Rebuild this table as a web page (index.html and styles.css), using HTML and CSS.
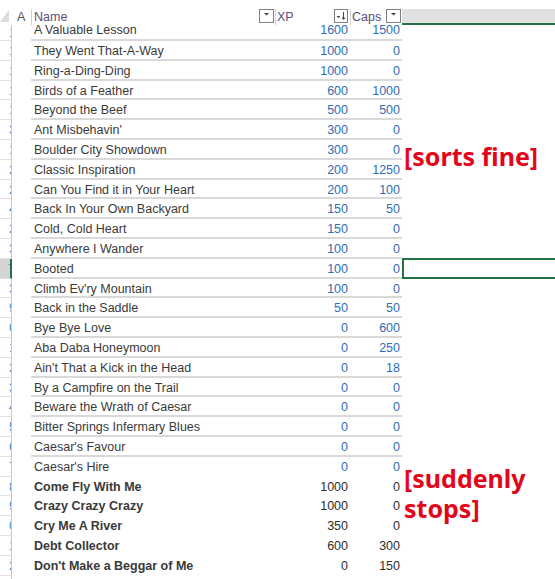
FILE: index.html
```html
<!DOCTYPE html>
<html>
<head>
<meta charset="utf-8">
<link rel="stylesheet" href="styles.css">
</head>
<body>
<div class="sheet">
  <div class="row hdr">
    <div class="rh corner"><svg width="11" height="25" viewBox="0 0 11 25"><polygon points="9,10 9,22 0,22" fill="#dcdcdc"/></svg></div>
    <div class="ca hc">A</div>
    <div class="name hc bl"><span>Name</span><svg class="btn" width="15" height="14" viewBox="0 0 15 14"><rect x="0.5" y="0.5" width="14" height="13" fill="#fff" stroke="#808080"/><polygon points="5,4 10,4 7.5,6.5" fill="#444"/></svg></div>
    <div class="xp hc bl"><span>XP</span><svg class="btn" width="14" height="14" viewBox="0 0 14 14"><rect x="0.5" y="0.5" width="13" height="13" fill="#fff" stroke="#808080"/><polygon points="2.5,7 6.5,7 4.5,9" fill="#444"/><line x1="9.5" y1="3" x2="9.5" y2="10" stroke="#444"/><polygon points="7.5,8.5 11.5,8.5 9.5,11" fill="#444"/></svg></div>
    <div class="caps hc bl"><span>Caps</span><svg class="btn" width="15" height="14" viewBox="0 0 15 14"><rect x="0.5" y="0.5" width="14" height="13" fill="#fff" stroke="#808080"/><polygon points="5,4 10,4 7.5,6.5" fill="#444"/></svg></div>
    <div class="rest hrest"></div>
  </div>

  <div class="row first line"><div class="rh"><span class="rn">1</span></div><div class="ca"></div><div class="name">A Valuable Lesson</div><div class="xp">1600</div><div class="caps">1500</div><div class="rest"></div></div>
  <div class="row line"><div class="rh"><span class="rn">1</span></div><div class="ca"></div><div class="name">They Went That-A-Way</div><div class="xp">1000</div><div class="caps">0</div><div class="rest"></div></div>
  <div class="row line"><div class="rh"><span class="rn">1</span></div><div class="ca"></div><div class="name">Ring-a-Ding-Ding</div><div class="xp">1000</div><div class="caps">0</div><div class="rest"></div></div>
  <div class="row line"><div class="rh"><span class="rn">1</span></div><div class="ca"></div><div class="name">Birds of a Feather</div><div class="xp">600</div><div class="caps">1000</div><div class="rest"></div></div>
  <div class="row line"><div class="rh"><span class="rn">1</span></div><div class="ca"></div><div class="name">Beyond the Beef</div><div class="xp">500</div><div class="caps">500</div><div class="rest"></div></div>
  <div class="row line"><div class="rh"><span class="rn">3</span></div><div class="ca"></div><div class="name">Ant Misbehavin'</div><div class="xp">300</div><div class="caps">0</div><div class="rest"></div></div>
  <div class="row line"><div class="rh"><span class="rn">1</span></div><div class="ca"></div><div class="name">Boulder City Showdown</div><div class="xp">300</div><div class="caps">0</div><div class="rest"></div></div>
  <div class="row line"><div class="rh"><span class="rn">2</span></div><div class="ca"></div><div class="name">Classic Inspiration</div><div class="xp">200</div><div class="caps">1250</div><div class="rest"></div></div>
  <div class="row line"><div class="rh"><span class="rn">2</span></div><div class="ca"></div><div class="name">Can You Find it in Your Heart</div><div class="xp">200</div><div class="caps">100</div><div class="rest"></div></div>
  <div class="row line"><div class="rh"><span class="rn">4</span></div><div class="ca"></div><div class="name">Back In Your Own Backyard</div><div class="xp">150</div><div class="caps">50</div><div class="rest"></div></div>
  <div class="row line"><div class="rh"><span class="rn">2</span></div><div class="ca"></div><div class="name">Cold, Cold Heart</div><div class="xp">150</div><div class="caps">0</div><div class="rest"></div></div>
  <div class="row line"><div class="rh"><span class="rn">3</span></div><div class="ca"></div><div class="name">Anywhere I Wander</div><div class="xp">100</div><div class="caps">0</div><div class="rest"></div></div>
  <div class="row line sel"><div class="rh"><span class="rn">7</span></div><div class="ca"></div><div class="name">Booted</div><div class="xp">100</div><div class="caps">0</div><div class="rest"></div></div>
  <div class="row line"><div class="rh"><span class="rn">3</span></div><div class="ca"></div><div class="name">Climb Ev'ry Mountain</div><div class="xp">100</div><div class="caps">0</div><div class="rest"></div></div>
  <div class="row line"><div class="rh"><span class="rn">9</span></div><div class="ca"></div><div class="name">Back in the Saddle</div><div class="xp">50</div><div class="caps">50</div><div class="rest"></div></div>
  <div class="row line"><div class="rh"><span class="rn">0</span></div><div class="ca"></div><div class="name">Bye Bye Love</div><div class="xp">0</div><div class="caps">600</div><div class="rest"></div></div>
  <div class="row line"><div class="rh"><span class="rn">1</span></div><div class="ca"></div><div class="name">Aba Daba Honeymoon</div><div class="xp">0</div><div class="caps">250</div><div class="rest"></div></div>
  <div class="row line"><div class="rh"><span class="rn">2</span></div><div class="ca"></div><div class="name">Ain't That a Kick in the Head</div><div class="xp">0</div><div class="caps">18</div><div class="rest"></div></div>
  <div class="row line"><div class="rh"><span class="rn">3</span></div><div class="ca"></div><div class="name">By a Campfire on the Trail</div><div class="xp">0</div><div class="caps">0</div><div class="rest"></div></div>
  <div class="row line"><div class="rh"><span class="rn">4</span></div><div class="ca"></div><div class="name">Beware the Wrath of Caesar</div><div class="xp">0</div><div class="caps">0</div><div class="rest"></div></div>
  <div class="row line"><div class="rh"><span class="rn">5</span></div><div class="ca"></div><div class="name">Bitter Springs Infermary Blues</div><div class="xp">0</div><div class="caps">0</div><div class="rest"></div></div>
  <div class="row line"><div class="rh"><span class="rn">6</span></div><div class="ca"></div><div class="name">Caesar's Favour</div><div class="xp">0</div><div class="caps">0</div><div class="rest"></div></div>
  <div class="row"><div class="rh"><span class="rn">7</span></div><div class="ca"></div><div class="name">Caesar's Hire</div><div class="xp">0</div><div class="caps">0</div><div class="rest"></div></div>
  <div class="row bold"><div class="rh"><span class="rn">8</span></div><div class="ca"></div><div class="name">Come Fly With Me</div><div class="xp">1000</div><div class="caps">0</div><div class="rest"></div></div>
  <div class="row bold"><div class="rh"><span class="rn">9</span></div><div class="ca"></div><div class="name">Crazy Crazy Crazy</div><div class="xp">1000</div><div class="caps">0</div><div class="rest"></div></div>
  <div class="row bold"><div class="rh"><span class="rn">0</span></div><div class="ca"></div><div class="name">Cry Me A River</div><div class="xp">350</div><div class="caps">0</div><div class="rest"></div></div>
  <div class="row bold"><div class="rh"><span class="rn">1</span></div><div class="ca"></div><div class="name">Debt Collector</div><div class="xp">600</div><div class="caps">300</div><div class="rest"></div></div>
  <div class="row bold"><div class="rh"><span class="rn">2</span></div><div class="ca"></div><div class="name">Don't Make a Beggar of Me</div><div class="xp">0</div><div class="caps">150</div><div class="rest"></div></div>
  <div class="row"><div class="rh"></div><div class="ca"></div><div class="name"></div><div class="xp"></div><div class="caps"></div><div class="rest"></div></div>

  <div class="note note-sorts">[sorts fine]</div>
  <div class="note note-stops">[suddenly<br>stops]</div>
</div>
</body>
</html>
```

FILE: styles.css
```css
html, body {
  margin: 0;
  padding: 0;
  background: #fff;
  overflow: hidden;
}
body {
  font-family: "Liberation Sans", Arial, sans-serif;
  font-size: 12.5px;
  color: #3a3a3a;
}
.sheet {
  position: relative;
  width: 555px;
  height: 579px;
  overflow: hidden;
}
.row {
  display: flex;
  height: 19.8px;
  box-sizing: border-box;
}
.row > div {
  box-sizing: border-box;
  height: 100%;
  line-height: 17.5px;
  padding-top: 2px;
  white-space: nowrap;
  overflow: hidden;
}
.rh {
  width: 12px;
  flex: none;
  border-right: 1px solid #c8c8c8;
  border-bottom: 1px solid #e1e1e1;
  display: flex;
  justify-content: flex-end;
  overflow: hidden;
}
.rn {
  color: #3b8ad8;
  margin-right: -5px;
  padding-left: 4px;
}
.ca {
  width: 19px;
  flex: none;
}
.name {
  width: 244px;
  flex: none;
  padding-left: 3px;
}
.xp {
  width: 75px;
  flex: none;
  text-align: right;
  padding-right: 2px;
  color: #2f6db5;
}
.caps {
  width: 52px;
  flex: none;
  text-align: right;
  padding-right: 2px;
  color: #2f6db5;
}
.rest {
  flex: 1;
}
.line .name,
.line .xp,
.line .caps {
  border-bottom: 2px solid #d9d9d9;
}
.row.first {
  height: 16px;
}
.row.first > div {
  padding-top: 0;
}
.first .name,
.first .xp,
.first .caps {
  line-height: 11px;
}
.bold .name {
  font-weight: bold;
  color: #3a3a3a;
}
.bold .xp,
.bold .caps {
  color: #2e2e2e;
}
.sel .rh {
  background: #d4d4d4;
  border-right: 2px solid #217346;
}
.sel .rest {
  border: 2px solid #217346;
  border-right: none;
  margin-top: -1px;
  height: calc(100% + 1px);
}

/* header */
.row.hdr {
  height: 25px;
}
.row.hdr > div {
  line-height: 16px;
  padding-top: 0;
}
.corner {
  border-bottom: none;
  border-right: none;
  display: block;
}
.corner svg {
  display: block;
}
.hc {
  margin-top: 9px;
  height: 16px !important;
  color: #5b4e78;
  display: flex;
  align-items: flex-start;
}
.ca.hc {
  padding-left: 5px;
  color: #555;
}
.hc.bl {
  border-left: 1px solid #d0d0d0;
}
.name.hc {
  width: 244px;
  padding-left: 2px;
  justify-content: space-between;
}
.xp.hc {
  text-align: left;
  padding-left: 1px;
  padding-right: 2px;
  justify-content: space-between;
}
.caps.hc {
  text-align: left;
  padding-left: 1px;
  padding-right: 1px;
  justify-content: space-between;
}
.name.hc .btn {
  margin-right: 1px;
}
.btn {
  display: block;
  flex: none;
}
.hrest {
  margin-top: 9px;
  height: 16px !important;
  background: #e1e1e1;
  border-bottom: 2px solid #217346;
}

/* annotations */
.note {
  position: absolute;
  left: 404px;
  font-family: "Noto Sans", sans-serif;
  font-weight: 700;
  font-size: 25px;
  line-height: 30px;
  color: #e2061b;
  white-space: nowrap;
}
.note-sorts {
  top: 141px;
}
.note-stops {
  top: 463px;
}
```
